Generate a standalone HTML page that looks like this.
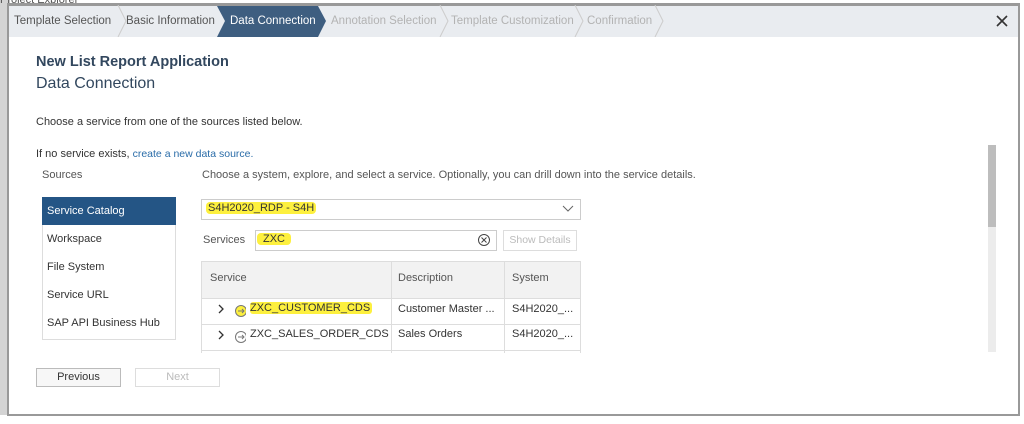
<!DOCTYPE html><html><head><style>
body{margin:0;width:1024px;height:424px;background:#fff;font-family:"Liberation Sans",sans-serif;position:relative;overflow:hidden;color:#333}
.a{position:absolute}
.bg{left:0;top:0;width:10px;height:415px;background:#d4d4d4}
.dlg{left:7px;top:3px;width:1013px;height:413px;background:#fff;border:2px solid #999;border-top-width:3px;box-sizing:border-box}
.hdr{left:9px;top:6px;width:1009px;height:31px;background:#e9ecf0}
.st{top:5px;height:32px;line-height:32px;font-size:11.5px;color:#555}
.dim{color:#b3b3b3}
.t{font-size:11px}
.row{left:42px;width:134px;height:28px;line-height:28px;font-size:11px;padding-left:5px;box-sizing:border-box}
.hl{background:#fdf03e}
</style></head><body>
<div class="a bg"></div>
<div class="a" style="left:0;top:-6px;font-size:11px;color:#555">Project Explorer</div>
<div class="a dlg"></div>
<div class="a hdr"></div>
<svg class="a" style="left:8px;top:5px" width="1010" height="32">
<polygon points="209,1 310,1 318,16 310,32 209,32 217,16" fill="#3e5e80"/>
<polyline points="110,0 118,16 110,32" fill="none" stroke="#ccc"/>
<polyline points="432,0 440,16 432,32" fill="none" stroke="#ccc"/>
<polyline points="567,0 575,16 567,32" fill="none" stroke="#ccc"/>
<polyline points="647,0 655,16 647,32" fill="none" stroke="#ccc"/>
<path d="M989 11l10 10M999 11l-10 10" stroke="#333" stroke-width="1.6"/>
</svg>
<div class="a st" style="left:14px">Template Selection</div>
<div class="a st" style="left:126px">Basic Information</div>
<div class="a st" style="left:230px;color:#fff">Data Connection</div>
<div class="a st dim" style="left:331px">Annotation Selection</div>
<div class="a st dim" style="left:451px">Template Customization</div>
<div class="a st dim" style="left:587px">Confirmation</div>
<div class="a" style="left:36px;top:54px;font-size:14.5px;font-weight:bold;color:#32475e">New List Report Application</div>
<div class="a" style="left:36px;top:75px;font-size:16px;color:#32475e">Data Connection</div>
<div class="a t" style="left:36px;top:116px">Choose a service from one of the sources listed below.</div>
<div class="a t" style="left:36px;top:148px">If no service exists, <span style="color:#2a6ca8;font-size:10.5px">create a new data source.</span></div>
<div class="a t" style="left:42px;top:169px;color:#555">Sources</div>
<div class="a t" style="left:202px;top:169px;color:#555">Choose a system, explore, and select a service. Optionally, you can drill down into the service details.</div>
<div class="a" style="left:42px;top:197px;width:134px;height:143px;border:1px solid #ddd;box-sizing:border-box"></div>
<div class="a row" style="top:197px;background:#245585;color:#fff">Service Catalog</div>
<div class="a row" style="top:225px">Workspace</div>
<div class="a row" style="top:253px">File System</div>
<div class="a row" style="top:281px">Service URL</div>
<div class="a row" style="top:309px">SAP API Business Hub</div>
<div class="a" style="left:201px;top:199px;width:380px;height:21px;border:1px solid #ccc;box-sizing:border-box"></div>
<div class="a t hl" style="left:206px;top:202px;padding:0 2px;border-radius:4px">S4H2020_RDP - S4H</div>
<svg class="a" style="left:562px;top:205px" width="12" height="8"><path d="M1 1l5 5 5-5" fill="none" stroke="#666"/></svg>
<div class="a t" style="left:203px;top:234px;color:#555">Services</div>
<div class="a" style="left:255px;top:230px;width:242px;height:21px;border:1px solid #ccc;box-sizing:border-box"></div>
<div class="a t hl" style="left:257px;top:233px;padding:0 6px;border-radius:4px">ZXC</div>
<svg class="a" style="left:477px;top:233px" width="14" height="14"><circle cx="7" cy="7" r="5.5" fill="none" stroke="#444"/><path d="M4.5 4.5l5 5M9.5 4.5l-5 5" stroke="#444"/></svg>
<div class="a" style="left:503px;top:230px;width:74px;height:21px;border:1px solid #ddd;box-sizing:border-box;font-size:10.5px;color:#bbb;text-align:center;line-height:19px">Show Details</div>
<div class="a" style="left:201px;top:261px;width:380px;height:92px;border:1px solid #ddd;border-bottom:none;box-sizing:border-box;overflow:hidden">
<div style="height:36px;background:#f2f2f2;border-bottom:1px solid #ddd"></div>
<div style="height:25px;border-bottom:1px solid #ddd"></div>
<div style="height:25px;border-bottom:1px solid #ddd"></div>
</div>
<div class="a" style="left:391px;top:261px;width:1px;height:92px;background:#ddd"></div>
<div class="a" style="left:504px;top:261px;width:1px;height:92px;background:#ddd"></div>
<div class="a t" style="left:210px;top:272px;color:#555">Service</div>
<div class="a t" style="left:398px;top:272px;color:#555">Description</div>
<div class="a t" style="left:512px;top:272px;color:#555">System</div>
<svg class="a" style="left:216px;top:302px" width="30" height="44"><path d="M3 3l4 4-4 4M3 29l4 4-4 4" fill="none" stroke="#333" stroke-width="1.3"/><circle cx="25" cy="9" r="5.5" fill="#fdf03e" stroke="#777"/><circle cx="25" cy="35" r="5.5" fill="none" stroke="#777"/><path d="M22 9h6M26 7l2 2-2 2M22 35h6M26 33l2 2-2 2" fill="none" stroke="#777"/></svg>
<div class="a t hl" style="left:250px;top:302px;padding-right:2px;border-radius:3px">ZXC_CUSTOMER_CDS</div>
<div class="a t" style="left:250px;top:328px">ZXC_SALES_ORDER_CDS</div>
<div class="a t" style="left:398px;top:303px">Customer Master ...</div>
<div class="a t" style="left:398px;top:328px">Sales Orders</div>
<div class="a t" style="left:512px;top:303px">S4H2020_...</div>
<div class="a t" style="left:512px;top:328px">S4H2020_...</div>
<div class="a" style="left:988px;top:145px;width:8px;height:207px;background:#ececec"></div>
<div class="a" style="left:988px;top:145px;width:8px;height:82px;background:#bdbdbd"></div>
<div class="a" style="left:36px;top:368px;width:85px;height:19px;border:1px solid #bbb;background:#f7f7f7;box-sizing:border-box;font-size:11px;text-align:center;line-height:17px">Previous</div>
<div class="a" style="left:135px;top:368px;width:85px;height:19px;border:1px solid #ddd;box-sizing:border-box;font-size:11px;text-align:center;line-height:17px;color:#bbb">Next</div>
</body></html>
